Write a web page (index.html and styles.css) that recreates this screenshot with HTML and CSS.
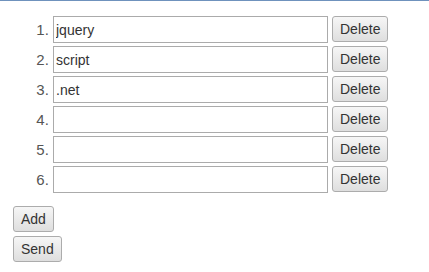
FILE: index.html
```html
<!DOCTYPE html>
<html lang="en">
<head>
    <meta charset="UTF-8">
    <title>Tags</title>
    <link rel="stylesheet" href="styles.css">
</head>
<body>
    <ol class="tag-list">
        <li><input class="tag-input" type="text" value="jquery"><button class="btn">Delete</button></li>
        <li><input class="tag-input" type="text" value="script"><button class="btn">Delete</button></li>
        <li><input class="tag-input" type="text" value=".net"><button class="btn">Delete</button></li>
        <li><input class="tag-input" type="text" value=""><button class="btn">Delete</button></li>
        <li><input class="tag-input" type="text" value=""><button class="btn">Delete</button></li>
        <li><input class="tag-input" type="text" value=""><button class="btn">Delete</button></li>
    </ol>
    <div class="actions">
        <button class="btn">Add</button>
        <button class="btn">Send</button>
    </div>
</body>
</html>
```

FILE: styles.css
```css
body {
    margin: 0;
    border-top: 1px solid #6f92bd;
    font-family: "Liberation Sans", Arial, sans-serif;
    font-size: 14px;
    color: #333;
    background: #fff;
}
.tag-list {
    margin: 0;
    padding: 15px 0 0 53px;
}
.tag-list li {
    height: 27px;
    line-height: 27px;
    margin-bottom: 3px;
    color: #555;
    font-size: 15px;
}
.tag-list li::marker {
    color: #555;
}
.tag-input {
    box-sizing: border-box;
    width: 275px;
    height: 27px;
    margin: 0 4px 0 0;
    padding: 0 2px;
    border: 1px solid #ababab;
    font-family: "Liberation Sans", Arial, sans-serif;
    font-size: 14px;
    color: #333;
    vertical-align: top;
}
.btn {
    box-sizing: border-box;
    height: 26px;
    margin: 0;
    padding: 0 7px;
    border: 1px solid #acacac;
    border-radius: 3px;
    background: linear-gradient(#f6f6f6, #dedede);
    font-family: "Liberation Sans", Arial, sans-serif;
    font-size: 14px;
    line-height: 24px;
    color: #333;
    vertical-align: top;
}
.actions {
    display: flex;
    flex-direction: column;
    align-items: flex-start;
    gap: 4px;
    padding: 10px 0 0 13px;
}
```
